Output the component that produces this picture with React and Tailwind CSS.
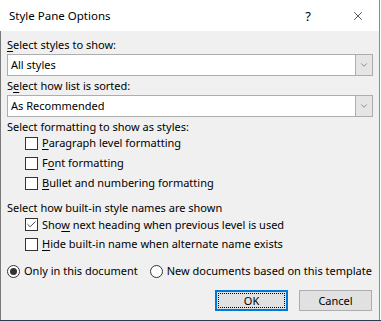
import { Check, ChevronDown, X } from "lucide-react";

function Mn({ children }) {
  // mnemonic letter
  return <span className="underline underline-offset-[2px]">{children}</span>;
}

function Combo({ value }) {
  return (
    <div className="flex h-[22px] w-[366px] items-stretch border border-[#adadad] bg-white">
      <div className="flex flex-1 items-center pl-[3px]">{value}</div>
      <div className="flex w-[17px] items-center justify-center border-l border-[#adadad] bg-[#e5e5e5]">
        <ChevronDown className="h-[10px] w-[10px] text-[#555]" strokeWidth={1.5} />
      </div>
    </div>
  );
}

function CheckRow({ checked, h = "h-[20px]", children }) {
  return (
    <div className={`flex ${h} items-center pl-[18px]`}>
      <div className="flex h-[13px] w-[13px] items-center justify-center border border-[#333] bg-white">
        {checked && <Check className="h-[11px] w-[11px] text-[#333]" strokeWidth={2} />}
      </div>
      <span className="ml-[4px]">{children}</span>
    </div>
  );
}

function Radio({ checked, children }) {
  return (
    <div className="flex items-center">
      <div className="flex h-[13px] w-[13px] items-center justify-center rounded-full border border-[#333] bg-white">
        {checked && <div className="h-[7px] w-[7px] rounded-full bg-[#333]" />}
      </div>
      <span className="ml-[4px]">{children}</span>
    </div>
  );
}

export default function App() {
  return (
    <div
      className="relative h-[321px] w-[381px] overflow-hidden whitespace-nowrap bg-white text-[11px] leading-[16px] text-black"
      style={{ fontFamily: '"Noto Sans", "Open Sans", sans-serif' }}
    >
      <div className="flex h-[320px] w-[380px] flex-col border-r border-[#8a8a8a]">
        {/* Title bar */}
        <div className="flex h-[31px] items-center bg-white pl-[9px] text-[11.5px]">
          <span className="flex-1">Style Pane Options</span>
          <span className="mr-[40px] text-[13px]">?</span>
          <X className="mr-[14px] h-[14px] w-[14px] text-[#111]" strokeWidth={1.2} />
        </div>

        {/* Body */}
        <div className="flex flex-1 flex-col border-l border-[#7a7a7a] bg-[#f0f0f0] pl-[6px] pt-[6px]">
          <div>
            <Mn>S</Mn>elect styles to show:
          </div>
          <div className="mt-[1px]">
            <Combo value="All styles" />
          </div>
          <div className="mt-[2px]">
            S<Mn>e</Mn>lect how list is sorted:
          </div>
          <div className="mt-[1px]">
            <Combo value="As Recommended" />
          </div>
          <div className="mt-[2px]">Select formatting to show as styles:</div>
          <div className="mt-[-2px] flex flex-col">
            <CheckRow>
              <Mn>P</Mn>aragraph level formatting
            </CheckRow>
            <CheckRow>
              F<Mn>o</Mn>nt formatting
            </CheckRow>
            <CheckRow>
              <Mn>B</Mn>ullet and numbering formatting
            </CheckRow>
          </div>
          <div className="mt-[7px]">Select how built-in style names are shown</div>
          <div className="mt-[-1px] flex flex-col">
            <CheckRow checked h="h-[19.5px]">
              Sho<Mn>w</Mn> next heading when previous level is used
            </CheckRow>
            <CheckRow h="h-[19.5px]">
              <Mn>H</Mn>ide built-in name when alternate name exists
            </CheckRow>
          </div>
          <div className="mt-[9px] flex h-[16px] items-center gap-[12px]">
            <Radio checked>Only in this document</Radio>
            <Radio>New documents based on this template</Radio>
          </div>
          <div className="mt-[11px] flex justify-end gap-[11px] pr-[7px]">
            <button className="flex h-[21px] w-[73px] items-center justify-center border-2 border-[#0078d7] bg-[#e1e1e1]">
              <span className="flex h-[15px] w-[67px] items-center justify-center border border-dotted border-black">
                OK
              </span>
            </button>
            <button className="flex h-[21px] w-[73px] items-center justify-center border border-[#adadad] bg-[#e1e1e1]">
              Cancel
            </button>
          </div>
        </div>
      </div>
      <div className="h-[1px] w-full bg-[#2b3a55]" />
    </div>
  );
}
